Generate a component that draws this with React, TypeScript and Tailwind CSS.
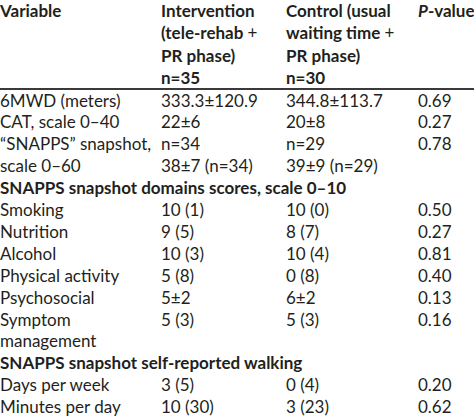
const rows: { type: "data" | "section"; cells: string[] }[] = [
  { type: "data", cells: ["6MWD (meters)", "333.3±120.9", "344.8±113.7", "0.69"] },
  { type: "data", cells: ["CAT, scale 0–40", "22±6", "20±8", "0.27"] },
  { type: "data", cells: ["“SNAPPS” snapshot,", "n=34", "n=29", "0.78"] },
  { type: "data", cells: ["scale 0–60", "38±7 (n=34)", "39±9 (n=29)", ""] },
  { type: "section", cells: ["SNAPPS snapshot domains scores, scale 0–10"] },
  { type: "data", cells: ["Smoking", "10 (1)", "10 (0)", "0.50"] },
  { type: "data", cells: ["Nutrition", "9 (5)", "8 (7)", "0.27"] },
  { type: "data", cells: ["Alcohol", "10 (3)", "10 (4)", "0.81"] },
  { type: "data", cells: ["Physical activity", "5 (8)", "0 (8)", "0.40"] },
  { type: "data", cells: ["Psychosocial", "5±2", "6±2", "0.13"] },
  { type: "data", cells: ["Symptom", "5 (3)", "5 (3)", "0.16"] },
  { type: "data", cells: ["management", "", "", ""] },
  { type: "section", cells: ["SNAPPS snapshot self-reported walking"] },
  { type: "data", cells: ["Days per week", "3 (5)", "0 (4)", "0.20"] },
  { type: "data", cells: ["Minutes per day", "10 (30)", "3 (23)", "0.62"] },
];

const widths = ["w-[161px]", "w-[125px]", "w-[132px]", "flex-1"];

export default function App() {
  return (
    <div className="w-[474px] h-[416px] overflow-hidden bg-white text-[#231f20] font-['Lato',sans-serif] text-[17px]">
      <div className="flex font-bold leading-[22.3px] h-[88px] whitespace-nowrap">
        <div className="w-[161px] shrink-0">Variable</div>
        <div className="w-[125px] shrink-0">
          Intervention
          <br />
          (tele-rehab <span className="font-normal">+</span>
          <br />
          PR phase)
          <br />
          n=35
        </div>
        <div className="w-[132px] shrink-0">
          Control (usual
          <br />
          waiting time <span className="font-normal">+</span>
          <br />
          PR phase)
          <br />
          n=30
        </div>
        <div className="flex-1">
          <i>P</i>-value
        </div>
      </div>
      <div className="h-[1.5px] bg-[#3a3a3a]" />
      <div className="leading-[21.9px]">
        {rows.map((row, i) =>
          row.type === "section" ? (
            <div key={i} className="font-bold whitespace-nowrap">
              {row.cells[0]}
            </div>
          ) : (
            <div key={i} className="flex">
              {row.cells.map((c, j) => (
                <div key={j} className={`${widths[j]} shrink-0 whitespace-nowrap`}>
                  {c}
                </div>
              ))}
            </div>
          )
        )}
      </div>
    </div>
  );
}
